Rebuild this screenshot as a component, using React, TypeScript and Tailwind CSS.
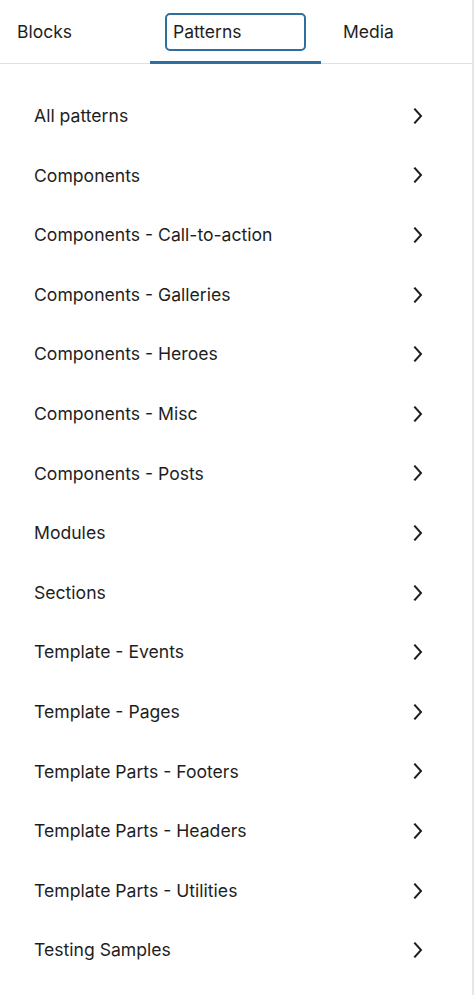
import React from 'react';

const items = [
  'All patterns',
  'Components',
  'Components - Call-to-action',
  'Components - Galleries',
  'Components - Heroes',
  'Components - Misc',
  'Components - Posts',
  'Modules',
  'Sections',
  'Template - Events',
  'Template - Pages',
  'Template Parts - Footers',
  'Template Parts - Headers',
  'Template Parts - Utilities',
  'Testing Samples',
];

function Chevron() {
  return (
    <svg viewBox="0 0 24 24" className="w-8 h-8 fill-[#1e1e1e]" aria-hidden>
      <path d="M10.6 6L9.4 7l4.6 5-4.6 5 1.2 1 5.4-6z" />
    </svg>
  );
}

export default function App() {
  return (
    <div
      className="w-[474px] min-h-[995px] bg-white text-[#1e1e1e] border-r-2 border-[#e6e6e6]"
      style={{ fontFamily: 'Inter, "Noto Sans", sans-serif' }}
    >
      {/* tabs */}
      <div className="flex h-[64px] border-b border-[#e0e0e0] text-[17.5px]">
        <div className="w-[150px] flex items-center pl-[17px] pt-[1px]">Blocks</div>
        <div className="w-[171px] relative flex items-center px-[15px]">
          <div className="w-full h-[38px] flex items-center pl-[6px] pt-[1px] border-2 border-[#2f6fa0] rounded-[5px]">
            Patterns
          </div>
          <div className="absolute left-0 right-0 bottom-[-1px] h-[3px] bg-[#2f6fa0]" />
        </div>
        <div className="flex-1 flex items-center pl-[22px] pt-[1px]">Media</div>
      </div>

      {/* categories */}
      <ul className="pt-[22px] text-[17.6px]">
        {items.map((label) => (
          <li key={label} className="h-[59.6px] flex items-center justify-between pl-[34px] pr-[39px]">
            <span className="pt-[1px]">{label}</span>
            <Chevron />
          </li>
        ))}
      </ul>
    </div>
  );
}
